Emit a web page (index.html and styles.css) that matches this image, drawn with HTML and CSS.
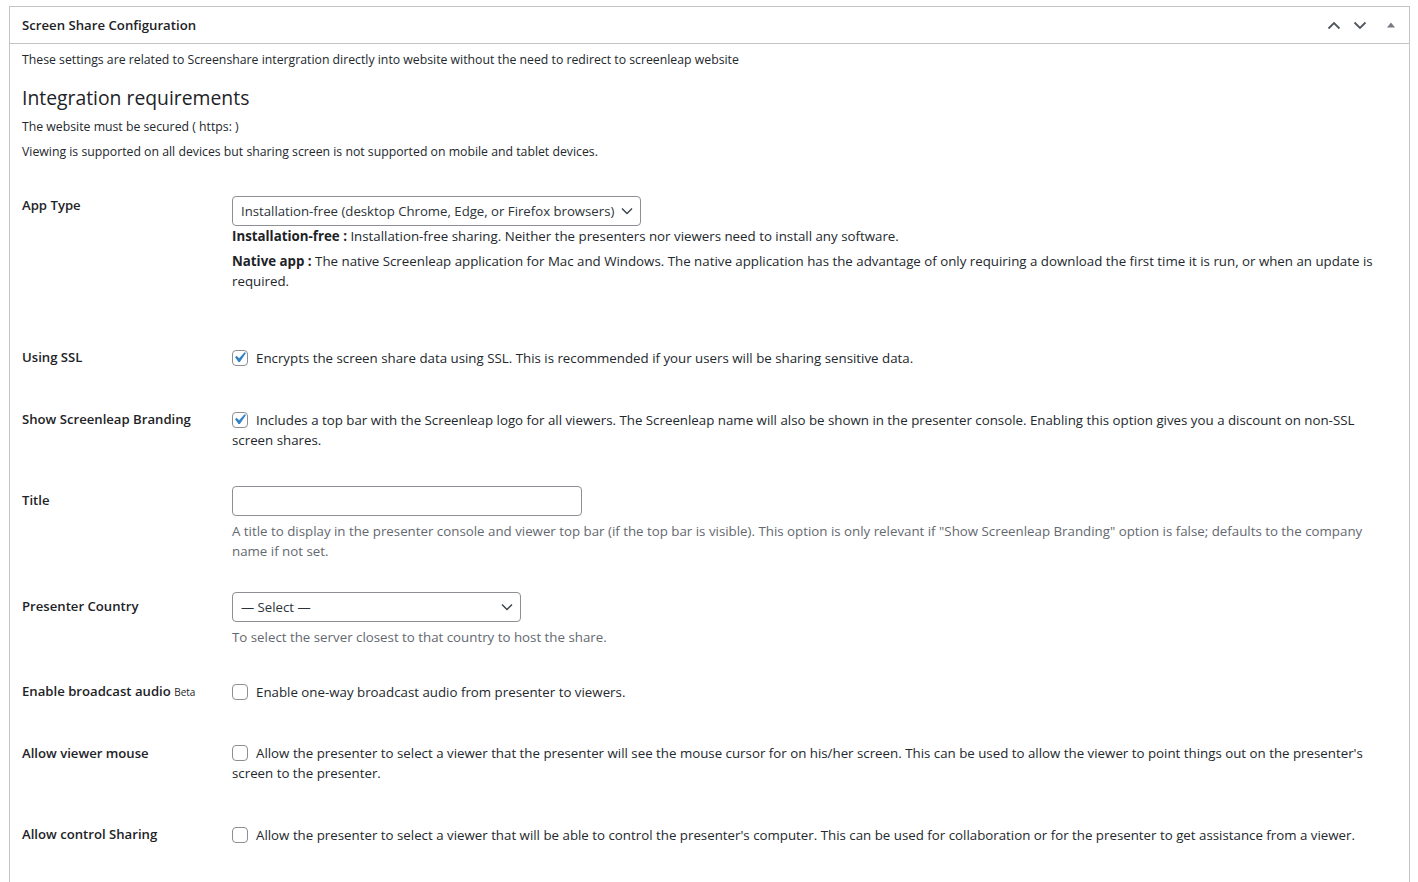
FILE: index.html
```html
<!DOCTYPE html>
<html lang="en">
<head>
<meta charset="utf-8">
<title>Screen Share Configuration</title>
<link rel="stylesheet" href="styles.css">
</head>
<body>
<div class="postbox">
  <div class="postbox-header">
    <h2 class="hndle">Screen Share Configuration</h2>
    <div class="handle-actions">
      <button class="handle-btn" type="button" aria-label="Move up">
        <svg width="14" height="9" viewBox="0 0 14 9"><path d="M1.5 7.5 L7 2 L12.5 7.5" fill="none" stroke="#50575e" stroke-width="1.8"/></svg>
      </button>
      <button class="handle-btn" type="button" aria-label="Move down">
        <svg width="14" height="9" viewBox="0 0 14 9"><path d="M1.5 1.5 L7 7 L12.5 1.5" fill="none" stroke="#50575e" stroke-width="1.8"/></svg>
      </button>
      <button class="handle-btn handle-toggle" type="button" aria-label="Toggle panel">
        <svg width="10" height="6" viewBox="0 0 10 6"><path d="M1 5.5 L5 0.5 L9 5.5 Z" fill="#787c82"/></svg>
      </button>
    </div>
  </div>
  <div class="inside">
    <p class="intro">These settings are related to Screenshare intergration directly into website without the need to redirect to screenleap website</p>
    <h3 class="section-title">Integration requirements</h3>
    <p class="req">The website must be secured ( https: )</p>
    <p class="req">Viewing is supported on all devices but sharing screen is not supported on mobile and tablet devices.</p>

    <div class="field-row row-app">
      <div class="field-label">App Type</div>
      <div class="field-control">
        <div class="select-wrap select-app">
          <select class="select"><option>Installation-free (desktop Chrome, Edge, or Firefox browsers)</option></select>
          <svg class="select-arrow" width="12" height="8" viewBox="0 0 12 8"><path d="M1 1.5 L6 6.5 L11 1.5" fill="none" stroke="#3c434a" stroke-width="1.4"/></svg>
        </div>
        <p class="note"><strong>Installation-free :</strong> Installation-free sharing. Neither the presenters nor viewers need to install any software.</p>
        <p class="note note-gap"><strong>Native app :</strong> The native Screenleap application for Mac and Windows. The native application has the advantage of only requiring a download the first time it is run, or when an update is required.</p>
      </div>
    </div>

    <div class="field-row row-ssl">
      <div class="field-label">Using SSL</div>
      <div class="field-control">
        <label class="check"><span class="checkbox is-checked"><svg viewBox="0 0 20 20" width="21" height="21"><path d="M14.83 4.89l1.34.94-5.81 8.38H9.02L5.78 9.67l1.34-1.25 2.57 2.4z" fill="#3582c4"/></svg></span>Encrypts the screen share data using SSL. This is recommended if your users will be sharing sensitive data.</label>
      </div>
    </div>

    <div class="field-row row-branding">
      <div class="field-label">Show Screenleap Branding</div>
      <div class="field-control">
        <label class="check"><span class="checkbox is-checked"><svg viewBox="0 0 20 20" width="21" height="21"><path d="M14.83 4.89l1.34.94-5.81 8.38H9.02L5.78 9.67l1.34-1.25 2.57 2.4z" fill="#3582c4"/></svg></span>Includes a top bar with the Screenleap logo for all viewers. The Screenleap name will also be shown in the presenter console. Enabling this option gives you a discount on non-SSL screen shares.</label>
      </div>
    </div>

    <div class="field-row row-title">
      <div class="field-label label-input">Title</div>
      <div class="field-control">
        <input class="text-input" type="text" aria-label="Title">
        <p class="description">A title to display in the presenter console and viewer top bar (if the top bar is visible). This option is only relevant if "Show Screenleap Branding" option is false; defaults to the company name if not set.</p>
      </div>
    </div>

    <div class="field-row row-country">
      <div class="field-label label-input">Presenter Country</div>
      <div class="field-control">
        <div class="select-wrap select-country">
          <select class="select"><option>— Select —</option></select>
          <svg class="select-arrow" width="12" height="8" viewBox="0 0 12 8"><path d="M1 1.5 L6 6.5 L11 1.5" fill="none" stroke="#3c434a" stroke-width="1.4"/></svg>
        </div>
        <p class="description">To select the server closest to that country to host the share.</p>
      </div>
    </div>

    <div class="field-row row-audio">
      <div class="field-label">Enable broadcast audio <small class="beta">Beta</small></div>
      <div class="field-control">
        <label class="check"><span class="checkbox"></span>Enable one-way broadcast audio from presenter to viewers.</label>
      </div>
    </div>

    <div class="field-row row-mouse">
      <div class="field-label label-nudge">Allow viewer mouse</div>
      <div class="field-control">
        <label class="check"><span class="checkbox"></span>Allow the presenter to select a viewer that the presenter will see the mouse cursor for on his/her screen. This can be used to allow the viewer to point things out on the presenter's screen to the presenter.</label>
      </div>
    </div>

    <div class="field-row row-control">
      <div class="field-label">Allow control Sharing</div>
      <div class="field-control">
        <label class="check"><span class="checkbox"></span>Allow the presenter to select a viewer that will be able to control the presenter's computer. This can be used for collaboration or for the presenter to get assistance from a viewer.</label>
      </div>
    </div>
  </div>
</div>
</body>
</html>
```

FILE: styles.css
```css
* { box-sizing: border-box; }

html, body {
  margin: 0;
  background: #fff;
}

body {
  font-family: "Open Sans", "Noto Sans", sans-serif;
  color: #3c434a;
  font-size: 13.3px;
  overflow: hidden;
  height: 882px;
}

.postbox {
  margin: 6px 8px 0 9px;
  border: 1px solid #c3c4c7;
  border-bottom: 0;
  background: #fff;
  min-height: 900px;
}

.postbox-header {
  display: flex;
  align-items: center;
  justify-content: space-between;
  height: 37px;
  border-bottom: 1px solid #c3c4c7;
  padding-left: 12px;
}

.hndle {
  margin: 0;
  font-size: 13.2px;
  font-weight: 600;
  color: #1d2327;
  line-height: 1.4;
}

.handle-actions {
  display: flex;
  height: 100%;
}

.handle-btn {
  display: flex;
  align-items: center;
  justify-content: center;
  width: 26px;
  height: 100%;
  padding: 0;
  border: 0;
  background: none;
}

.handle-toggle {
  width: 36px;
}

.inside {
  padding: 7px 12px 12px;
}

.intro {
  margin: 0;
  font-size: 12.27px;
  line-height: 18px;
  color: #23282d;
}

.section-title {
  margin: 16px 0 0;
  font-size: 19.35px;
  font-weight: 400;
  line-height: 26px;
  color: #1d2327;
}

.req {
  margin: 6px 0 0;
  font-size: 12.27px;
  line-height: 19px;
  color: #23282d;
}

.field-row {
  display: grid;
  grid-template-columns: 210px 1fr;
  padding-right: 10px;
}

.row-app { margin-top: 35px; }
.row-ssl { margin-top: 57px; }
.row-branding { margin-top: 42px; }
.row-title { margin-top: 36px; }
.row-country { margin-top: 31px; }
.row-audio { margin-top: 35px; }
.row-mouse { margin-top: 41px; }
.row-control { margin-top: 42px; }

.field-label {
  font-size: 13.15px;
  font-weight: 600;
  line-height: 18px;
  color: #1d2327;
}

.label-input {
  padding-top: 5px;
}

.label-nudge {
  padding-top: 1px;
}

.beta {
  font-size: 10px;
  font-weight: 400;
}

.field-control {
  font-size: 13.3px;
  line-height: 20px;
  color: #23282d;
}

.select-wrap {
  position: relative;
  height: 30px;
}

.select-app { width: 409px; }
.select-country { width: 289px; }

.select {
  appearance: none;
  -webkit-appearance: none;
  width: 100%;
  height: 30px;
  margin: 0;
  padding: 0 16px 0 8px;
  border: 1px solid #8c8f94;
  border-radius: 4px;
  background: #fff;
  font-family: inherit;
  font-size: 13.2px;
  color: #2c3338;
}

.select-arrow {
  position: absolute;
  right: 8px;
  top: 11px;
  pointer-events: none;
}

.note {
  margin: 0;
}

.note strong {
  font-weight: 700;
  color: #1d2327;
}

.note-gap {
  margin-top: 5px;
}

.text-input {
  display: block;
  width: 350px;
  height: 30px;
  margin: 0;
  padding: 0 8px;
  border: 1px solid #8c8f94;
  border-radius: 4px;
  background: #fff;
  font-family: inherit;
  font-size: 13.3px;
}

.description {
  margin: 5px 0 0;
  color: #646970;
}

.check {
  display: block;
}

.checkbox {
  position: relative;
  display: inline-block;
  width: 16px;
  height: 16px;
  margin-right: 8px;
  vertical-align: -3px;
  border: 1px solid #8c8f94;
  border-radius: 4px;
  background: #fff;
}

.checkbox svg {
  position: absolute;
  left: -4px;
  top: -4px;
}
```
